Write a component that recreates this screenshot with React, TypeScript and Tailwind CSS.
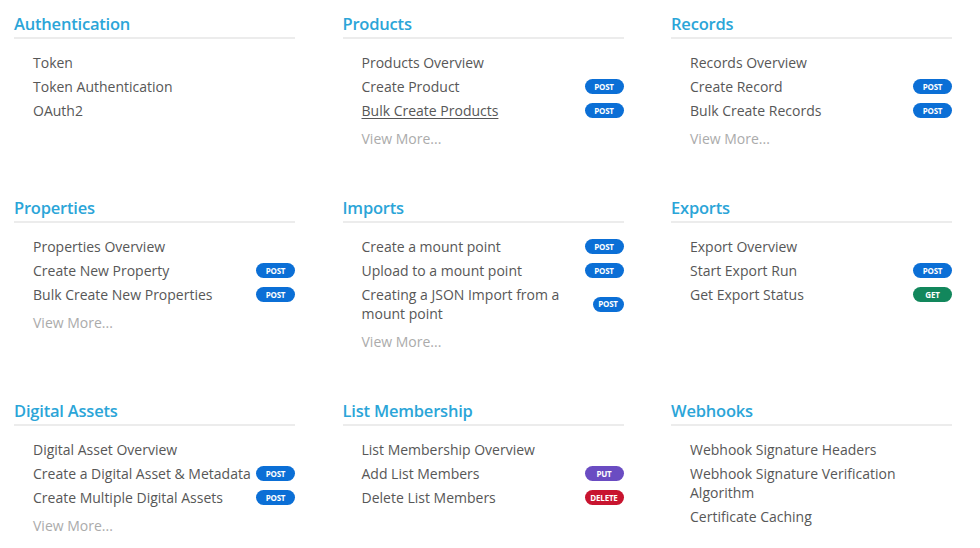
import React from "react";

type Method = "POST" | "GET" | "PUT" | "DELETE";

type Item = { label: string; method?: Method; underline?: boolean; narrow?: boolean };

type Section = { title: string; items: Item[]; more?: boolean };

const sections: Section[] = [
  {
    title: "Authentication",
    items: [{ label: "Token" }, { label: "Token Authentication" }, { label: "OAuth2" }],
  },
  {
    title: "Products",
    more: true,
    items: [
      { label: "Products Overview" },
      { label: "Create Product", method: "POST" },
      { label: "Bulk Create Products", method: "POST", underline: true },
    ],
  },
  {
    title: "Records",
    more: true,
    items: [
      { label: "Records Overview" },
      { label: "Create Record", method: "POST" },
      { label: "Bulk Create Records", method: "POST" },
    ],
  },
  {
    title: "Properties",
    more: true,
    items: [
      { label: "Properties Overview" },
      { label: "Create New Property", method: "POST" },
      { label: "Bulk Create New Properties", method: "POST" },
    ],
  },
  {
    title: "Imports",
    more: true,
    items: [
      { label: "Create a mount point", method: "POST" },
      { label: "Upload to a mount point", method: "POST" },
      { label: "Creating a JSON Import from a mount point", method: "POST", narrow: true },
    ],
  },
  {
    title: "Exports",
    items: [
      { label: "Export Overview" },
      { label: "Start Export Run", method: "POST" },
      { label: "Get Export Status", method: "GET" },
    ],
  },
  {
    title: "Digital Assets",
    more: true,
    items: [
      { label: "Digital Asset Overview" },
      { label: "Create a Digital Asset & Metadata", method: "POST" },
      { label: "Create Multiple Digital Assets", method: "POST" },
    ],
  },
  {
    title: "List Membership",
    items: [
      { label: "List Membership Overview" },
      { label: "Add List Members", method: "PUT" },
      { label: "Delete List Members", method: "DELETE" },
    ],
  },
  {
    title: "Webhooks",
    items: [
      { label: "Webhook Signature Headers" },
      { label: "Webhook Signature Verification Algorithm" },
      { label: "Certificate Caching" },
    ],
  },
];

const badgeColors: Record<Method, string> = {
  POST: "bg-[#0b6fd6]",
  GET: "bg-[#12875c]",
  PUT: "bg-[#6a4cc2]",
  DELETE: "bg-[#c8142f]",
};

function Badge({ method, narrow }: { method: Method; narrow?: boolean }) {
  return (
    <span
      className={
        "shrink-0 h-[15px] rounded-full flex items-center justify-center text-[8px] font-bold leading-none text-white tracking-tight " +
        (narrow ? "w-[31px] " : "w-[39px] ") +
        badgeColors[method]
      }
    >
      {method}
    </span>
  );
}

export default function App() {
  return (
    <div
      className="min-h-screen bg-white pl-[14px] pt-[12px]"
      style={{ fontFamily: '"Open Sans", "Noto Sans", sans-serif' }}
    >
      <div className="grid grid-cols-[281px_281px_281px] gap-x-[47.5px] gap-y-[48px]">
        {sections.map((s) => (
          <div key={s.title}>
            <h2 className="text-[16.5px] font-semibold leading-[24px] text-[#2ba5d8] border-b-2 border-[#ececec] pb-[1px] tracking-[-0.2px]">
              {s.title}
            </h2>
            <ul className="mt-[14px] pl-[19px] flex flex-col gap-[5px] text-[14px] leading-[19px] text-[#575757]">
              {s.items.map((it) => (
                <li key={it.label} className="flex items-center justify-between">
                  <span className={it.underline ? "underline underline-offset-2" : ""}>{it.label}</span>
                  {it.method && <Badge method={it.method} narrow={it.narrow} />}
                </li>
              ))}
              {s.more && <li className="mt-[4px] text-[#ababab]">View More...</li>}
            </ul>
          </div>
        ))}
      </div>
    </div>
  );
}
